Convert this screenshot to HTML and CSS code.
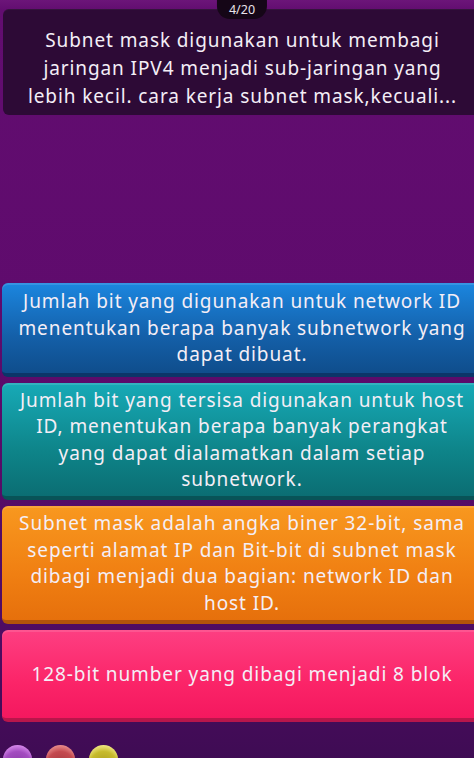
FILE: index.html
```html
<!DOCTYPE html>
<html>
<head>
<meta charset="utf-8">
<link rel="stylesheet" href="styles.css">
</head>
<body>
<div class="page">
  <div class="question-wrap">
    <div class="counter">4/20</div>
    <div class="question">Subnet mask digunakan untuk membagi jaringan IPV4 menjadi sub-jaringan yang lebih kecil. cara kerja subnet mask,kecuali...</div>
  </div>
  <div class="spacer"></div>
  <div class="options">
    <div class="option blue">Jumlah bit yang digunakan untuk network ID menentukan berapa banyak subnetwork yang dapat dibuat.</div>
    <div class="option teal">Jumlah bit yang tersisa digunakan untuk host ID, menentukan berapa banyak perangkat yang dapat dialamatkan dalam setiap subnetwork.</div>
    <div class="option orange">Subnet mask adalah angka biner 32-bit, sama seperti alamat IP dan Bit-bit di subnet mask dibagi menjadi dua bagian: network ID dan host ID.</div>
    <div class="option pink">128-bit number yang dibagi menjadi 8 blok</div>
  </div>
  <div class="powerups">
    <div class="dot dot-purple"></div>
    <div class="dot dot-red"></div>
    <div class="dot dot-yellow"></div>
  </div>
</div>
</body>
</html>
```
FILE: styles.css
```css
html, body {
  margin: 0;
  padding: 0;
  height: 100%;
  overflow: hidden;
}
body {
  background: linear-gradient(180deg, #6c1579 0px, #620d70 10px, #5f0b6d 300px, #4f0c63 620px, #3f0c54 758px);
  font-family: "Noto Sans", sans-serif;
  color: #f4eef6;
}
.page {
  width: 480px;
  margin-left: 2px;
  height: 758px;
  display: flex;
  flex-direction: column;
}
.page > * {
  flex: none;
}
.question-wrap {
  position: relative;
  padding-top: 9px;
}
.counter {
  position: absolute;
  top: 0;
  left: 50%;
  transform: translateX(-50%);
  background: #150617;
  color: #e8e2ea;
  font-size: 12.5px;
  line-height: 19px;
  padding: 0 12px;
  border-radius: 0 0 13px 13px;
  z-index: 1;
}
.question {
  box-sizing: border-box;
  margin-left: 1px;
  background: #2d0a36;
  border-radius: 6px;
  text-align: center;
  font-size: 19px;
  letter-spacing: 0.9px;
  line-height: 28px;
  padding: 17px 22px 0;
  height: 106px;
  box-shadow: 0 1px 0 rgba(255,255,255,0.04) inset;
}
.spacer {
  height: 168px;
}
.options {
  display: flex;
  flex-direction: column;
  gap: 6px;
}
.option {
  box-sizing: border-box;
  border-radius: 6px;
  text-align: center;
  font-size: 19px;
  letter-spacing: 0.9px;
  line-height: 26.5px;
  padding: 4px 10px 4px;
  border-bottom: 4px solid transparent;
  box-shadow: inset 0 2px 0 rgba(255,255,255,0.12);
  display: flex;
  align-items: center;
  justify-content: center;
}
.blue {
  background: linear-gradient(180deg, #1b86df 0%, #145fa8 60%, #0f4d8c 100%);
  border-bottom-color: #0b3568;
  height: 94px;
}
.teal {
  background: linear-gradient(180deg, #17aab7 0%, #0e8489 60%, #0b6e73 100%);
  border-bottom-color: #085357;
  height: 117px;
}
.orange {
  background: linear-gradient(180deg, #f8981f 0%, #f07f12 60%, #e6700c 100%);
  border-bottom-color: #b2540a;
  height: 118px;
}
.pink {
  background: linear-gradient(180deg, #fd3f82 0%, #fb2468 60%, #f4185f 100%);
  border-bottom-color: #b8164b;
  height: 92px;
}
.powerups {
  display: flex;
  gap: 14px;
  margin-top: 23px;
  padding-left: 1px;
}
.dot {
  width: 29px;
  height: 29px;
  border-radius: 50%;
  flex: none;
}
.dot-purple {
  background: radial-gradient(circle at 50% 70%, #8a3aa6 0%, #a34dc0 55%, #d486ea 80%);
}
.dot-red {
  background: radial-gradient(circle at 50% 70%, #a5383f 0%, #c44a4f 55%, #e88a8a 80%);
}
.dot-yellow {
  background: radial-gradient(circle at 50% 70%, #a89b1e 0%, #c7bb2c 55%, #eee680 80%);
}
```
